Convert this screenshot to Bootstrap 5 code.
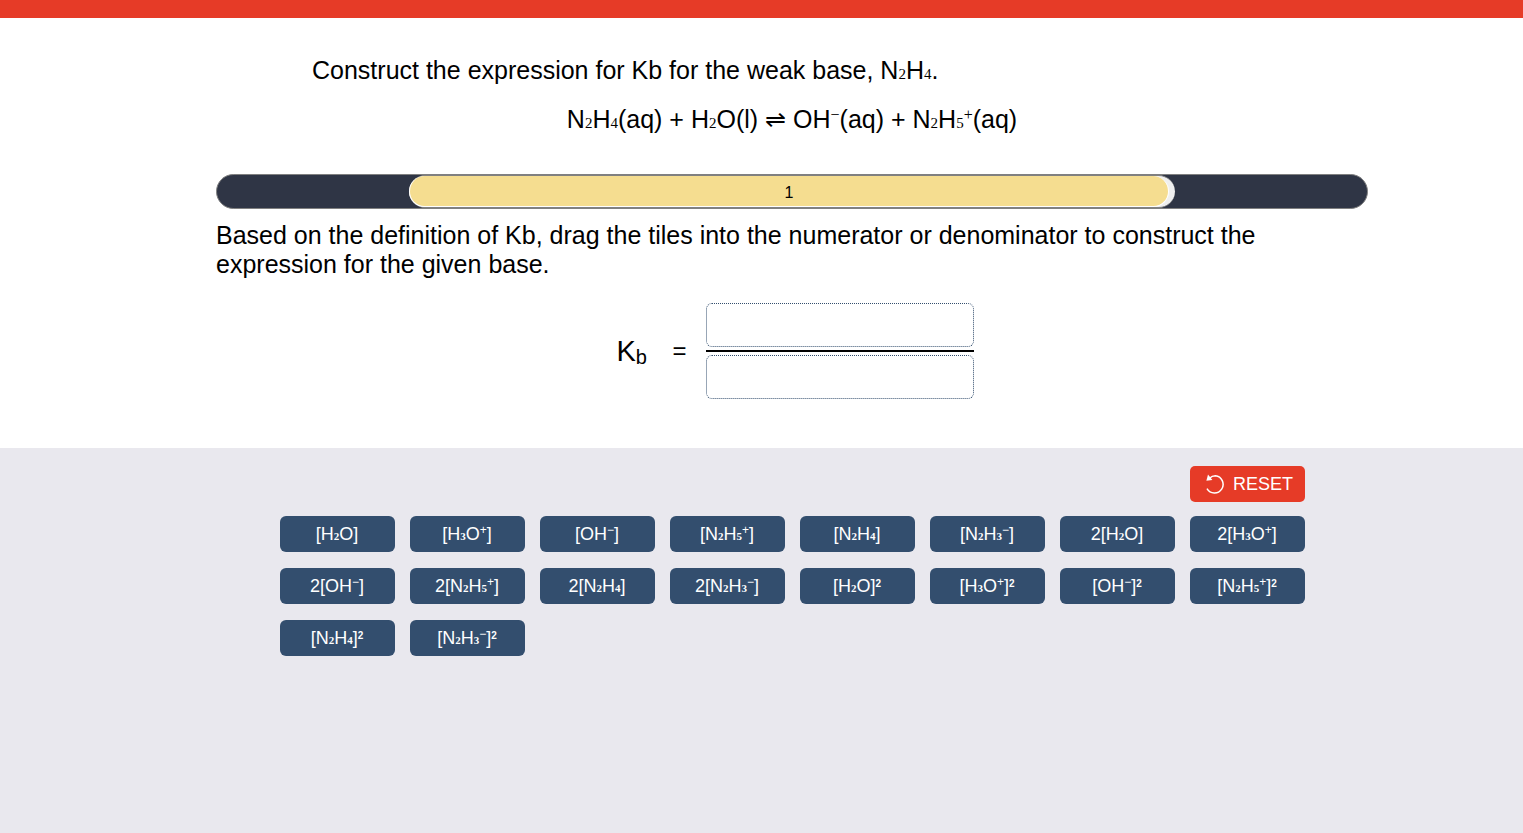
<!DOCTYPE html>
<html lang="en">
<head>
<meta charset="utf-8">
<meta name="viewport" content="width=device-width, initial-scale=1">
<title>Weak base Kb expression</title>
<link href="https://cdn.jsdelivr.net/npm/bootstrap@5.3.0/dist/css/bootstrap.min.css" rel="stylesheet">
<style>
  body { font-family: "Liberation Sans", Arial, sans-serif; color: #000; background: #e9e8ee; }
  .top-strip { height: 18px; background: #e63b27; }
  .question-area { background: #fff; padding-bottom: 49px; }
  .page-col { max-width: 1152px; }
  .prompt-text { font-size: 25px; line-height: 29px; }
  .prompt-head { padding: 38px 96px 0; }
  .prompt-text sub, .prompt-text sup, .tile sub { font-family: "Liberation Serif", serif; line-height: 1; }
  .prompt-text sub, .tile sub { bottom: 0; vertical-align: baseline; }
  .prompt-text sub { font-size: 15px; }
  .prompt-text sup { font-size: 16px; }
  .steps { height: 35px; margin-top: 40px; border: 1px solid #808080; background: #2f3545; }
  .step-shell { width: 766px; background: #efefef; border: 1px solid #808080; border-width: 1px 0; }
  .step-current { width: 760px; background: #f5dd90; border: 1px solid #fff; border-top-width: 0; font-size: 16px; line-height: 33px; color: #000; }
  .fraction { margin-top: 24px; padding-left: 6px; }
  .k-label { font-size: 29px; line-height: 36px; width: 56px; }
  .k-label sub { font-size: 20px; bottom: -3px; }
  .equals { font-size: 24px; line-height: 30px; width: 33px; }
  .drop-zone { width: 268px; height: 44px; border: 1px dotted #334e6e; border-radius: 6px; }
  .fraction-bar { height: 2px; margin: 3px 0; background: #000; }
  .tile-grid { max-width: 1025px; display: grid; grid-template-columns: repeat(auto-fill, 115px); gap: 16px 15px; justify-content: center; }
  .tool-row { max-width: 1025px; padding: 18px 0 14px; }
  .tile { height: 36px; padding: 0; border: 0; border-radius: 6px; background: #334e6e; color: #fff; font-size: 18px; line-height: 34px; }
  .tile:hover { background: #3d5b7f; color: #fff; }
  .tile sub { font-size: 11px; font-weight: 700; }
  .tile sup { font-size: 12px; line-height: 1; }
  .tile .power { font-size: 10px; font-weight: 700; }
  .reset { width: 115px; padding-left: 4px; background: #e63b27; border-radius: 5px; }
  .reset:hover { background: #cf3220; }
  @media (min-width: 1400px) { .shifted { padding-left: 61px; } }
</style>
</head>
<body>
<div class="top-strip"></div>
<main>
  <section class="question-area">
    <div class="shifted">
      <div class="page-col mx-auto">
        <div class="prompt-text prompt-head">
          <p class="mb-0">Construct the expression for Kb for the weak base, N<sub>2</sub>H<sub>4</sub>.</p>
        </div>
        <p class="prompt-text text-center mb-0 pt-3 mt-1">N<sub>2</sub>H<sub>4</sub>(aq) + H<sub>2</sub>O(l) ⇌ OH<sup>−</sup>(aq) + N<sub>2</sub>H<sub>5</sub><sup>+</sup>(aq)</p>
        <div class="steps rounded-pill d-flex justify-content-center">
          <div class="step-shell rounded-pill d-flex">
            <button type="button" class="step-current rounded-pill p-0">1</button>
          </div>
        </div>
        <p class="prompt-text mb-0 pt-2 mt-1">Based on the definition of Kb, drag the tiles into the numerator or denominator to construct the expression for the given base.</p>
        <div class="fraction d-flex justify-content-center align-items-center">
          <div class="k-label">K<sub>b</sub></div>
          <div class="equals">=</div>
          <div>
            <div class="drop-zone" aria-label="Numerator"></div>
            <div class="fraction-bar"></div>
            <div class="drop-zone" aria-label="Denominator"></div>
          </div>
        </div>
      </div>
    </div>
  </section>
  <section class="shifted">
    <div class="tool-row mx-auto d-flex justify-content-end">
      <button type="button" class="btn tile reset d-flex align-items-center justify-content-center gap-2">
        <svg width="20" height="20" viewBox="0 0 20 20" fill="none" aria-hidden="true"><path d="M4.5 4.2C6.3 2.5 8.3 1.8 10.4 1.8A8.6 8.6 0 1 1 2 14.6" stroke="#fff" stroke-width="1.5"/><path d="M3 .6 1.4 6.8 7.4 6Z" fill="#fff"/></svg>
        RESET
      </button>
    </div>
    <div class="tile-grid mx-auto">
      <button type="button" class="btn tile">[H<sub>2</sub>O]</button>
      <button type="button" class="btn tile">[H<sub>3</sub>O<sup>+</sup>]</button>
      <button type="button" class="btn tile">[OH<sup>−</sup>]</button>
      <button type="button" class="btn tile">[N<sub>2</sub>H<sub>5</sub><sup>+</sup>]</button>
      <button type="button" class="btn tile">[N<sub>2</sub>H<sub>4</sub>]</button>
      <button type="button" class="btn tile">[N<sub>2</sub>H<sub>3</sub><sup>−</sup>]</button>
      <button type="button" class="btn tile">2[H<sub>2</sub>O]</button>
      <button type="button" class="btn tile">2[H<sub>3</sub>O<sup>+</sup>]</button>
      <button type="button" class="btn tile">2[OH<sup>−</sup>]</button>
      <button type="button" class="btn tile">2[N<sub>2</sub>H<sub>5</sub><sup>+</sup>]</button>
      <button type="button" class="btn tile">2[N<sub>2</sub>H<sub>4</sub>]</button>
      <button type="button" class="btn tile">2[N<sub>2</sub>H<sub>3</sub><sup>−</sup>]</button>
      <button type="button" class="btn tile">[H<sub>2</sub>O]<sup class="power">2</sup></button>
      <button type="button" class="btn tile">[H<sub>3</sub>O<sup>+</sup>]<sup class="power">2</sup></button>
      <button type="button" class="btn tile">[OH<sup>−</sup>]<sup class="power">2</sup></button>
      <button type="button" class="btn tile">[N<sub>2</sub>H<sub>5</sub><sup>+</sup>]<sup class="power">2</sup></button>
      <button type="button" class="btn tile">[N<sub>2</sub>H<sub>4</sub>]<sup class="power">2</sup></button>
      <button type="button" class="btn tile">[N<sub>2</sub>H<sub>3</sub><sup>−</sup>]<sup class="power">2</sup></button>
    </div>
  </section>
</main>
<script src="https://cdn.jsdelivr.net/npm/bootstrap@5.3.0/dist/js/bootstrap.bundle.min.js"></script>
</body>
</html>
